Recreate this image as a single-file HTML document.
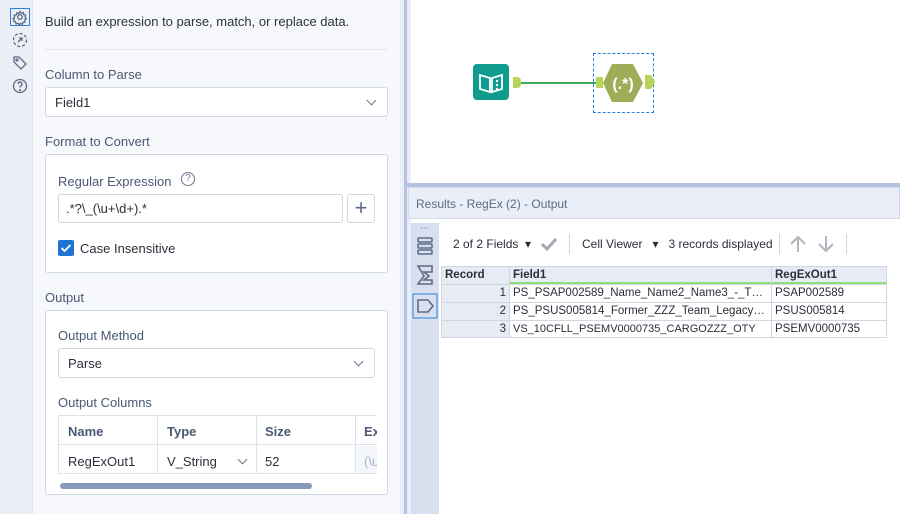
<!DOCTYPE html>
<html><head><style>
*{box-sizing:border-box;margin:0;padding:0}
body{width:900px;height:514px;overflow:hidden;font-family:"Liberation Sans",sans-serif;background:#fff;position:relative;color:#2a2f3a}
.a{position:absolute}
.lbl{font-size:13px;color:#4a5875}
.box{background:#fff;border:1px solid #cfd6e4;border-radius:3px}
.chev{position:absolute;width:7px;height:7px;border-right:1.5px solid #6b7890;border-bottom:1.5px solid #6b7890;transform:rotate(45deg)}
.t{font-size:11.5px;font-family:"Liberation Sans",sans-serif;white-space:nowrap;overflow:hidden;text-overflow:ellipsis}
</style></head><body>
<div class="a" style="left:0;top:0;width:33px;height:514px;background:#eceff6;border-right:1px solid #e3e7f0"></div>
<div class="a" style="left:10px;top:8px;width:20px;height:18px;border:1px solid #2f7fd6;border-radius:1px"></div>
<svg class="a" style="left:10px;top:8px" width="20" height="90" viewBox="0 0 20 90" fill="none" stroke="#5d6b85" stroke-width="1.3">
<circle cx="10" cy="9" r="2.3"/><path d="M10 3.5l1.3 1.6 2-.6.4 2 2 .7-.7 2 1.3 1.5-1.6 1.2.4 2-2 .3-.7 2-1.9-.8-1.3 1.5-1.2-1.6-2 .6-.4-2-2-.6.7-2L3 10.5l1.6-1.3-.4-2 2-.3.7-2 1.9.8z"/>
<circle cx="10" cy="32" r="6.5" stroke-dasharray="3 2"/><path d="M8 34l4-4M9 30h3v3"/>
<path d="M4 49v5l7 7 5-5-7-7z"/><circle cx="7" cy="52" r="1"/>
<circle cx="10" cy="78" r="6.5"/><path d="M8 76a2 2 0 1 1 2.5 2c-.5.3-.5.8-.5 1.5"/><circle cx="10" cy="82" r=".5"/>
</svg>
<div class="a" style="left:33px;top:0;width:367px;height:514px;background:#f6f8fc"></div>
<div class="a" style="left:45px;top:14px;font-size:13px;color:#2d3240">Build an expression to parse, match, or replace data.</div>
<div class="a" style="left:45px;top:49px;width:343px;height:1px;background:#e3e7ef"></div>
<div class="a lbl" style="left:45px;top:67px">Column to Parse</div>
<div class="a box" style="left:45px;top:87px;width:343px;height:30px"><span class="a" style="left:9px;top:7px;font-size:13px">Field1</span><span class="chev" style="right:12px;top:9px"></span></div>
<div class="a lbl" style="left:45px;top:134px">Format to Convert</div>
<div class="a box" style="left:45px;top:154px;width:343px;height:119px"></div>
<div class="a lbl" style="left:58px;top:174px">Regular Expression</div>
<div class="a" style="left:181px;top:172px;width:14px;height:14px;border:1.2px solid #6b7890;border-radius:50%;font-size:10px;color:#6b7890;text-align:center;line-height:12px">?</div>
<div class="a box" style="left:58px;top:194px;width:285px;height:29px"><span class="a" style="left:7px;top:6px;font-size:13px">.*?\_(\u+\d+).*</span></div>
<div class="a box" style="left:347px;top:194px;width:28px;height:29px;text-align:center;font-size:22px;line-height:26px;color:#5d6b85">+</div>
<div class="a" style="left:58px;top:240px;width:16px;height:16px;background:#1f73d1;border-radius:2px"><svg width="16" height="16"><path d="M3.5 8l3 3 6-6" stroke="#fff" stroke-width="1.8" fill="none"/></svg></div>
<div class="a" style="left:80px;top:241px;font-size:13px">Case Insensitive</div>
<div class="a lbl" style="left:45px;top:290px">Output</div>
<div class="a box" style="left:45px;top:310px;width:343px;height:185px"></div>
<div class="a lbl" style="left:58px;top:328px">Output Method</div>
<div class="a box" style="left:58px;top:348px;width:317px;height:30px"><span class="a" style="left:9px;top:7px;font-size:13px">Parse</span><span class="chev" style="right:12px;top:9px"></span></div>
<div class="a lbl" style="left:58px;top:395px">Output Columns</div>
<div class="a" style="left:58px;top:415px;width:319px;height:59px;border:1px solid #dde2ec;border-right:none;overflow:hidden;background:#fff">
 <div class="a" style="left:0;top:0;width:319px;height:29px;border-bottom:1px solid #dde2ec;background:#fff"></div>
 <div class="a" style="left:98px;top:0;width:1px;height:59px;background:#dde2ec"></div>
 <div class="a" style="left:197px;top:0;width:1px;height:59px;background:#dde2ec"></div>
 <div class="a" style="left:296px;top:0;width:1px;height:59px;background:#dde2ec"></div>
 <div class="a" style="left:297px;top:30px;width:30px;height:29px;background:#f3f6fb"></div>
 <b class="a" style="left:9px;top:8px;font-size:13px;color:#4a5875">Name</b>
 <b class="a" style="left:108px;top:8px;font-size:13px;color:#4a5875">Type</b>
 <b class="a" style="left:206px;top:8px;font-size:13px;color:#4a5875">Size</b>
 <b class="a" style="left:305px;top:8px;font-size:13px;color:#4a5875">Ex</b>
 <span class="a" style="left:9px;top:38px;font-size:13px">RegExOut1</span>
 <span class="a" style="left:108px;top:38px;font-size:13px">V_String</span>
 <span class="chev" style="left:180px;top:40px"></span>
 <span class="a" style="left:206px;top:38px;font-size:13px">52</span>
 <span class="a" style="left:305px;top:38px;font-size:13px;color:#aab3c5">(\u</span>
</div>
<div class="a" style="left:60px;top:483px;width:252px;height:6px;border-radius:3px;background:#8799b9"></div>
<div class="a" style="left:400px;top:0;width:11px;height:514px;background:#e9eef8"></div>
<div class="a" style="left:404px;top:0;width:3px;height:514px;background:#b4c3e2"></div>
<div class="a" style="left:411px;top:0;width:489px;height:183px;background:#fff"></div>
<div class="a" style="left:473px;top:64px;width:36px;height:36px;background:#0f9b8e;border-radius:4px"></div>
<svg class="a" style="left:473px;top:64px" width="36" height="36"><path d="M7 11l10 3v14l-10-3zM29 11l-10 3v14l10-3z" fill="none" stroke="#fff" stroke-width="1.8"/><circle cx="24" cy="17" r="1.2" fill="#fff"/><circle cx="24" cy="21" r="1.2" fill="#fff"/><circle cx="24" cy="25" r="1.2" fill="#fff"/></svg>
<div class="a" style="left:513px;top:77px;width:8px;height:11px;background:#b6d45a;border-radius:0 4px 4px 0"></div>
<div class="a" style="left:521px;top:82px;width:78px;height:2px;background:#3fa65a"></div>
<div class="a" style="left:593px;top:53px;width:61px;height:60px;border:1px dashed #2a7fd6"></div>
<div class="a" style="left:596px;top:77px;width:7px;height:11px;background:#b6d45a"></div>
<svg class="a" style="left:602px;top:63px" width="42" height="40"><polygon points="10,1 31,1 41,20 31,39 10,39 1,20" fill="#9eae58"/><text x="21" y="26" text-anchor="middle" font-family="Liberation Sans" font-weight="bold" font-size="16" fill="#fff">(.*)</text></svg>
<div class="a" style="left:645px;top:75px;width:10px;height:14px;background:#b6d45a;clip-path:polygon(0 0,60% 0,100% 50%,60% 100%,0 100%)"></div>
<div class="a" style="left:407px;top:183px;width:493px;height:4px;background:#b4c3e2"></div>
<div class="a" style="left:408px;top:187px;width:492px;height:32px;background:#e9eef8;border:1px solid #d4dae6"><span class="a" style="left:7px;top:9px;color:#5d6b85;font-size:12px">Results - RegEx (2) - Output</span></div>
<div class="a" style="left:411px;top:223px;width:28px;height:291px;background:#d8e0ef"></div>
<svg class="a" style="left:411px;top:223px" width="29" height="100" fill="none" stroke="#5d6b85" stroke-width="1.6"><path d="M10 5h2M13 5h2M16 5h2" stroke="#9aa6bd" stroke-width="1"/><rect x="7" y="15" width="14" height="4" rx="1"/><rect x="7" y="21" width="14" height="4" rx="1"/><rect x="7" y="27" width="14" height="4" rx="1"/><path d="M7 43h14v6H13l5 4-5 4h8v4H7l6-8z"/><rect x="2" y="71" width="24" height="24" stroke="#2a7fd6" stroke-width="1"/><path d="M7 77h10l5 6-5 6H7z"/></svg>
<div class="a" style="left:440px;top:223px;width:460px;height:42px;background:#fff"></div>
<span class="a" style="left:453px;top:237px;font-size:12px">2 of 2 Fields &nbsp;▾</span>
<svg class="a" style="left:540px;top:237px" width="18" height="14"><path d="M2 7l5 5 9-10" stroke="#a5a9b2" stroke-width="3" fill="none"/></svg>
<div class="a" style="left:569px;top:234px;width:1px;height:20px;background:#cfd4dd"></div>
<span class="a" style="left:582px;top:237px;font-size:12px">Cell Viewer &nbsp;&nbsp;▾ &nbsp;&nbsp;3 records displayed</span>
<div class="a" style="left:779px;top:234px;width:1px;height:20px;background:#cfd4dd"></div>
<svg class="a" style="left:788px;top:234px" width="50" height="20" fill="none" stroke="#b0b5be" stroke-width="2"><path d="M10 18V3M3 10l7-7 7 7M38 2v15M31 10l7 7 7-7"/></svg>
<div class="a" style="left:846px;top:234px;width:1px;height:20px;background:#cfd4dd"></div>
<div class="a" style="left:441px;top:266px;width:446px;height:72px;background:#d0d6e1"></div>
<div class="a t" style="left:442px;top:267px;width:67px;height:17px;background:#e7ebf3;font-weight:bold;padding:2px 3px">Record</div>
<div class="a t" style="left:510px;top:267px;width:261px;height:17px;background:#e7ebf3;font-weight:bold;padding:2px 3px;border-bottom:2px solid #8fe07a">Field1</div>
<div class="a t" style="left:772px;top:267px;width:114px;height:17px;background:#e7ebf3;font-weight:bold;padding:2px 3px;border-bottom:2px solid #8fe07a">RegExOut1</div>
<div class="a t" style="left:442px;top:285px;width:67px;height:17px;background:#e7ebf3;text-align:right;padding:2px 3px">1</div>
<div class="a t" style="left:510px;top:285px;width:261px;height:17px;background:#fff;padding:2px 3px">PS_PSAP002589_Name_Name2_Name3_-_TW_Name</div>
<div class="a t" style="left:772px;top:285px;width:114px;height:17px;background:#fff;padding:2px 3px">PSAP002589</div>
<div class="a t" style="left:442px;top:303px;width:67px;height:17px;background:#e7ebf3;text-align:right;padding:2px 3px">2</div>
<div class="a t" style="left:510px;top:303px;width:261px;height:17px;background:#fff;padding:2px 3px">PS_PSUS005814_Former_ZZZ_Team_Legacy_project</div>
<div class="a t" style="left:772px;top:303px;width:114px;height:17px;background:#fff;padding:2px 3px">PSUS005814</div>
<div class="a t" style="left:442px;top:321px;width:67px;height:16px;background:#e7ebf3;text-align:right;padding:2px 3px">3</div>
<div class="a t" style="left:510px;top:321px;width:261px;height:16px;background:#fff;padding:2px 3px;font-size:11px">VS_10CFLL_PSEMV0000735_CARGOZZZ_OTY</div>
<div class="a t" style="left:772px;top:321px;width:114px;height:16px;background:#fff;padding:2px 3px">PSEMV0000735</div>
</body></html>
